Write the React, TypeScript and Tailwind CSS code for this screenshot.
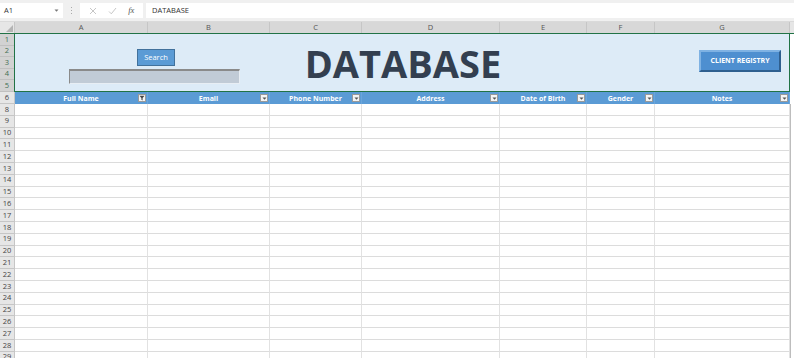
import React from 'react';

const cols = [
  { key: 'A', w: 'w-[133px]', label: 'Full Name', filter: true },
  { key: 'B', w: 'w-[122px]', label: 'Email' },
  { key: 'C', w: 'w-[92px]', label: 'Phone Number' },
  { key: 'D', w: 'w-[138px]', label: 'Address' },
  { key: 'E', w: 'w-[87px]', label: 'Date of Birth' },
  { key: 'F', w: 'w-[68px]', label: 'Gender' },
  { key: 'G', w: 'w-[135px]', label: 'Notes' },
];

const dataRows = Array.from({ length: 22 }, (_, i) => i + 8);

const DropBtn = ({ filter }: { filter?: boolean }) => (
  <div className="w-[8px] h-[8px] bg-[#f4f4f4] border border-[#9a9a9a] flex items-center justify-center shrink-0 mr-[1px]">
    {filter ? (
      <svg width="6" height="6" viewBox="0 0 6 6">
        <path d="M0.5 0.8h5L3.6 3v2.4L2.4 4.8V3z" fill="#444" />
      </svg>
    ) : (
      <svg width="5" height="3" viewBox="0 0 5 3">
        <path d="M0.5 0.5h4L2.5 2.7z" fill="#555" />
      </svg>
    )}
  </div>
);

export default function App() {
  return (
    <div className="w-[794px] h-[358px] overflow-hidden bg-white font-['Open_Sans',sans-serif] text-[#444]">
      {/* formula bar */}
      <div className="h-[22px] bg-[#f0f0f0] flex items-center border-b border-[#dadada]">
        <div className="w-[63px] h-[15px] bg-white flex items-center justify-between px-[4px] text-[7.5px] text-[#333]">
          <span>A1</span>
          <svg width="5" height="3" viewBox="0 0 5 3"><path d="M0.5 0.5h4L2.5 2.7z" fill="#777" /></svg>
        </div>
        <div className="w-[17px] flex flex-col items-center gap-[1.5px]">
          <span className="w-[1.5px] h-[1.5px] bg-[#aaa]" />
          <span className="w-[1.5px] h-[1.5px] bg-[#aaa]" />
          <span className="w-[1.5px] h-[1.5px] bg-[#aaa]" />
        </div>
        <div className="w-[63px] h-[15px] bg-white flex items-center justify-around px-[3px]">
          <svg width="8" height="8" viewBox="0 0 8 8"><path d="M1 1l6 6M7 1L1 7" stroke="#c0c0c0" strokeWidth="0.9" /></svg>
          <svg width="9" height="8" viewBox="0 0 9 8"><path d="M1 4.5l2.3 2.3L8 1" stroke="#c0c0c0" strokeWidth="0.9" fill="none" /></svg>
          <span className="font-['Liberation_Serif',serif] italic text-[8.5px] text-[#555]">fx</span>
        </div>
        <div className="ml-[3px] flex-1 h-[15px] bg-white flex items-center px-[6px] text-[7.5px] text-[#333]">
          DATABASE
        </div>
      </div>

      {/* column headers */}
      <div className="flex h-[12px] bg-[#e6e6e6] border-b border-[#217346]">
        <div className="w-[15px] h-full border-r border-[#c6c6c6] flex items-end justify-end p-[1px]">
          <svg width="7" height="7" viewBox="0 0 7 7"><path d="M7 0v7H0z" fill="#b4b4b4" /></svg>
        </div>
        {cols.map((c) => (
          <div
            key={c.key}
            className={`${c.w} h-full border-r border-[#c6c6c6] bg-[#d8d8d8] flex items-center justify-center text-[7.5px] leading-none text-[#555]`}
          >
            {c.key}
          </div>
        ))}
        <div className="flex-1 bg-[#e6e6e6]" />
      </div>

      {/* banner rows 1-5 */}
      <div className="flex h-[58px]">
        <div className="w-[15px] flex flex-col bg-[#d2d2d2] border-r border-[#217346]">
          {[1, 2, 3, 4, 5].map((n) => (
            <div key={n} className="flex-1 flex items-center justify-center text-[7.5px] leading-none text-[#3f6f52] border-b border-[#c0c0c0]">
              {n}
            </div>
          ))}
        </div>
        <div className="relative w-[775px] bg-[#ddebf7] border-r border-b border-[#217346]">
          <div className="absolute left-[122px] top-[15px] w-[38px] h-[17px] bg-[#5b9bd5] border border-[#41719c] flex items-center justify-center text-white text-[7.5px]">
            Search
          </div>
          <div className="absolute left-[54px] top-[35px] w-[171px] h-[15px] bg-[#c1cbd6] border-t-2 border-l border-[#8a8a8a] border-b border-r border-b-[#e8eef4] border-r-[#e8eef4]" />
          <div className="absolute left-[290px] top-[4px] w-[196px] h-[50px] flex items-center justify-center text-[38px] leading-none font-bold text-[#333f50]">
            DATABASE
          </div>
          <div className="absolute left-[684px] top-[16px] w-[82px] h-[22px] bg-[#4e8fd0] border-2 border-t-[#7fb2e3] border-l-[#7fb2e3] border-b-[#2f5f8f] border-r-[#2f5f8f] flex items-center justify-center text-white text-[7px] font-bold">
            CLIENT REGISTRY
          </div>
        </div>
        <div className="flex-1 bg-white" />
      </div>

      {/* table header row 6 */}
      <div className="flex h-[12px]">
        <div className="w-[15px] bg-[#e6e6e6] border-r border-b border-[#c6c6c6] flex items-center justify-center text-[7.5px] leading-none text-[#444]">
          6
        </div>
        {cols.map((c) => (
          <div
            key={c.key}
            className={`${c.w} h-full bg-[#5b9bd5] border-r border-[#6aa5db] flex items-center text-white text-[7px] leading-none font-bold`}
          >
            <span className="w-[9px] shrink-0" />
            <span className="flex-1 text-center">{c.label}</span>
            <DropBtn filter={c.filter} />
          </div>
        ))}
        <div className="flex-1 bg-white" />
      </div>

      {/* data rows */}
      {dataRows.map((n) => (
        <div key={n} className="flex h-[11.8px]">
          <div className="w-[15px] bg-[#e6e6e6] border-r border-b border-[#c6c6c6] flex items-center justify-center text-[7.5px] leading-none text-[#444]">
            {n}
          </div>
          {cols.map((c) => (
            <div key={c.key} className={`${c.w} h-full border-r border-b border-r-[#e2e2e2] border-b-[#dcdcdc]`} />
          ))}
          <div className="flex-1 border-l border-[#bdbdbd]" />
        </div>
      ))}
    </div>
  );
}
